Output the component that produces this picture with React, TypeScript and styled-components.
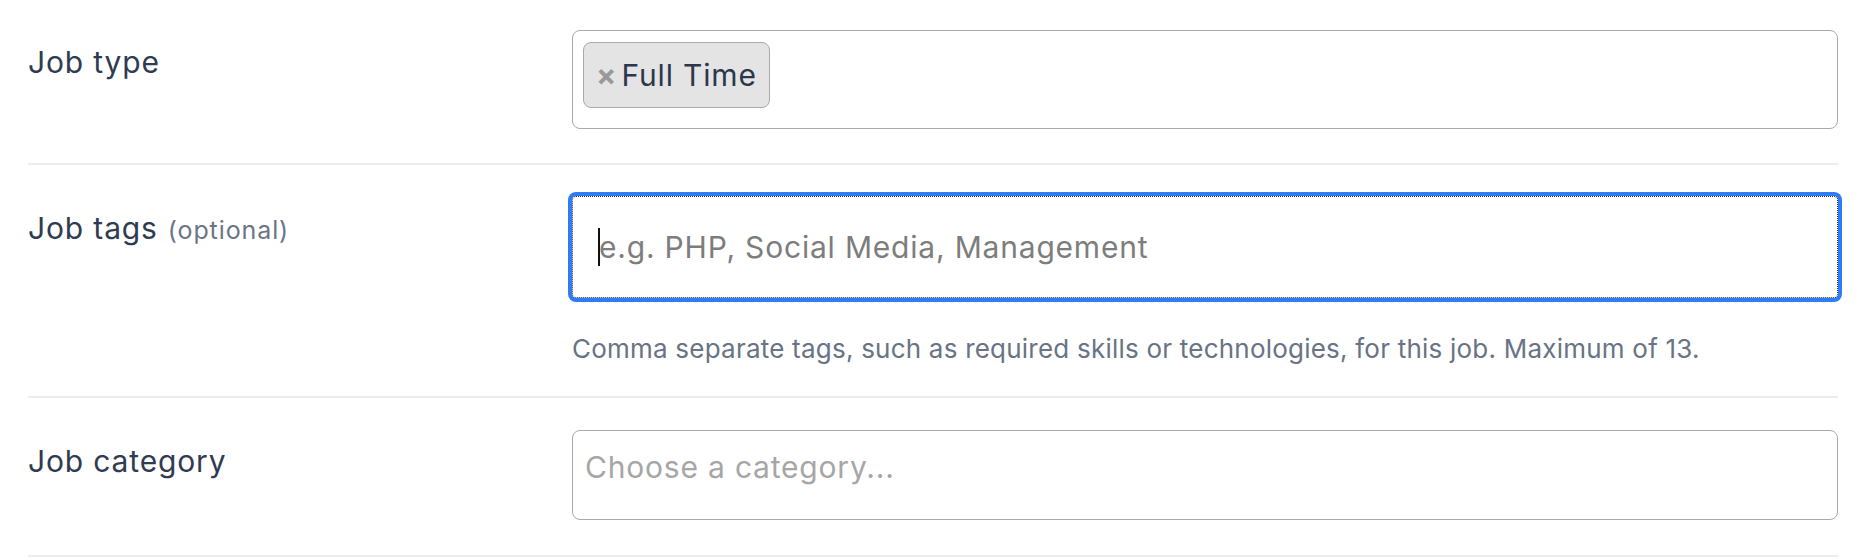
import React from "react";
import styled, { createGlobalStyle } from "styled-components";

const GlobalStyle = createGlobalStyle`
  html, body {
    margin: 0;
    padding: 0;
    background: #ffffff;
  }
  body {
    font-family: Inter, "Noto Sans", "Liberation Sans", sans-serif;
    -webkit-font-smoothing: antialiased;
  }
`;

const Form = styled.div`
  padding: 0 30px 0 28px;
`;

const Row = styled.div`
  display: grid;
  grid-template-columns: 544px 1fr;
  padding: 31px 0 34px;
  border-bottom: 2px solid #ededed;
  &:first-child {
    padding-top: 30px;
  }
`;

const Label = styled.label`
  padding-top: 11px;
  font-size: 30px;
  line-height: 42px;
  letter-spacing: 0.85px;
  color: #2f3b50;
`;

const Optional = styled.span`
  margin-left: 10px;
  font-size: 25px;
  letter-spacing: 0.9px;
  color: #6b7587;
`;

const Field = styled.div`
  display: flex;
  flex-direction: column;
`;

const TagBox = styled.div`
  display: flex;
  align-items: flex-start;
  padding: 11px 10px 20px;
  border: 1px solid #aaaaaa;
  border-radius: 8px;
  background: #fff;
`;

const Chip = styled.span`
  display: inline-flex;
  align-items: center;
  gap: 5px;
  padding: 11px 12px 11px 12px;
  border: 1px solid #aaaaaa;
  border-radius: 8px;
  background: #e4e4e4;
  font-size: 30px;
  line-height: 42px;
  letter-spacing: 0.85px;
  color: #2b374c;
`;

const Remove = styled.span`
  font-size: 30px;
  font-weight: 700;
  letter-spacing: 0;
  color: #999999;
`;

const SearchBox = styled.div`
  position: relative;
  display: flex;
  align-items: center;
  height: 102px;
  box-sizing: border-box;
  padding-left: 25px;
  border: 1px dotted #2a2a2a;
  border-radius: 4px;
  box-shadow: 0 0 0 4px #2f7cf4;
  background: #fff;
`;

const Caret = styled.span`
  width: 2px;
  height: 38px;
  margin-right: -1px;
  background: #111;
`;

const Placeholder = styled.span<{ $tone: string }>`
  font-size: 30px;
  line-height: 42px;
  letter-spacing: 0.8px;
  color: ${(p) => p.$tone};
`;

const Help = styled.p`
  margin: 37px 0 0;
  font-size: 26px;
  line-height: 27px;
  letter-spacing: 0.22px;
  color: #687385;
`;

const SelectBox = styled.div`
  height: 90px;
  box-sizing: border-box;
  margin: 1px 0 1px;
  padding: 15px 12px 0;
  border: 1px solid #aaaaaa;
  border-radius: 8px;
  background: #fff;
`;

export default function App() {
  return (
    <>
      <GlobalStyle />
      <Form>
        <Row>
          <Label>Job type</Label>
          <Field>
            <TagBox>
              <Chip>
                <Remove>×</Remove>
                Full Time
              </Chip>
            </TagBox>
          </Field>
        </Row>
        <Row>
          <Label>
            Job tags<Optional>(optional)</Optional>
          </Label>
          <Field>
            <SearchBox>
              <Caret />
              <Placeholder $tone="#7d7d7d">
                e.g. PHP, Social Media, Management
              </Placeholder>
            </SearchBox>
            <Help>
              Comma separate tags, such as required skills or technologies, for
              this job. Maximum of 13.
            </Help>
          </Field>
        </Row>
        <Row>
          <Label>Job category</Label>
          <Field>
            <SelectBox>
              <Placeholder $tone="#a6a6a6">Choose a category...</Placeholder>
            </SelectBox>
          </Field>
        </Row>
      </Form>
    </>
  );
}
